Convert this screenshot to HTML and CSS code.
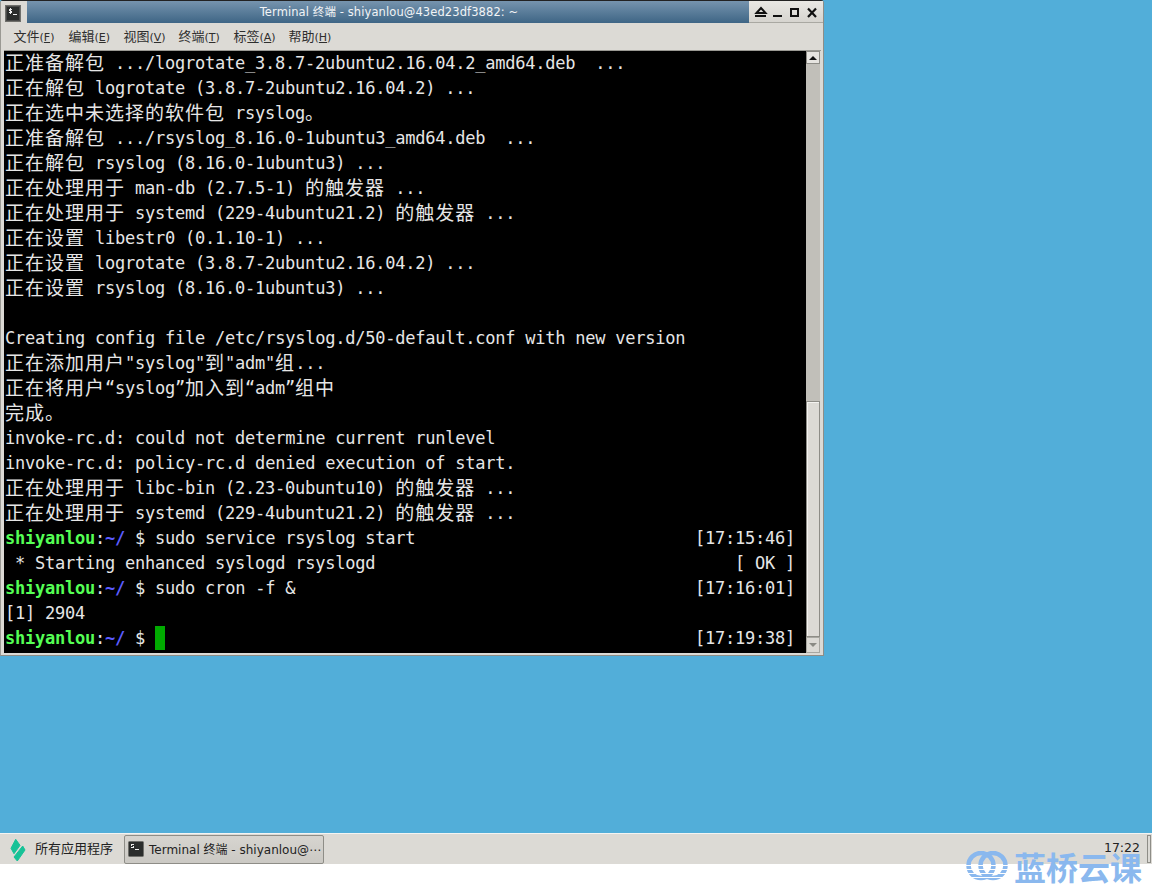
FILE: index.html
```html
<!DOCTYPE html>
<html lang="zh-CN">
<head>
<meta charset="utf-8">
<title>Terminal</title>
<link rel="stylesheet" href="styles.css">
</head>
<body>
<main class="desktop">
  <section class="window">
    <header class="titlebar">
      <div class="win-icon">
        <svg width="16" height="17" viewBox="0 0 16 17"><rect x="0.5" y="0.500" width="15" height="16" fill="#2b2d2c" stroke="#6f6f6b"/><rect x="1.500" y="1.500" width="13" height="14" fill="none" stroke="#4a4b4a"/><path d="M4 4h3v1H5v1h2v2H4V7h2V6H4zM5 3h1v6H5z" fill="#eeeeee"/><rect x="8" y="9" width="4" height="1" fill="#eeeeee"/></svg>
      </div>
      <div class="title">Terminal 终端 - shiyanlou@43ed23df3882: ~</div>
      <div class="win-buttons">
        <svg width="74" height="22" viewBox="0 0 74 22">
          <path d="M7.500 12 12 7l4.500 5z" fill="none" stroke="#111" stroke-width="2"/><rect x="6" y="14" width="11" height="2" fill="#111"/>
          <rect x="24" y="14" width="9" height="2" fill="#111"/>
          <rect x="42" y="8" width="7" height="7" fill="none" stroke="#111" stroke-width="2"/>
          <path d="M59 7.500l8 8.500M67 7.500l-8 8.500" stroke="#111" stroke-width="2.200" fill="none"/>
        </svg>
      </div>
    </header>
    <nav class="menubar">
      <span class="menu"><span class="mc">文件</span>(<u>F</u>)</span>
      <span class="menu"><span class="mc">编辑</span>(<u>E</u>)</span>
      <span class="menu"><span class="mc">视图</span>(<u>V</u>)</span>
      <span class="menu"><span class="mc">终端</span>(<u>T</u>)</span>
      <span class="menu"><span class="mc">标签</span>(<u>A</u>)</span>
      <span class="menu"><span class="mc">帮助</span>(<u>H</u>)</span>
    </nav>
    <div class="term-wrap">
      <div class="terminal">
        <div class="row"><span class="c">正准备解包</span> .../logrotate_3.8.7-2ubuntu2.16.04.2_amd64.deb  ...</div>
        <div class="row"><span class="c">正在解包</span> logrotate (3.8.7-2ubuntu2.16.04.2) ...</div>
        <div class="row"><span class="c">正在选中未选择的软件包</span> rsyslog<span class="c">。</span></div>
        <div class="row"><span class="c">正准备解包</span> .../rsyslog_8.16.0-1ubuntu3_amd64.deb  ...</div>
        <div class="row"><span class="c">正在解包</span> rsyslog (8.16.0-1ubuntu3) ...</div>
        <div class="row"><span class="c">正在处理用于</span> man-db (2.7.5-1) <span class="c">的触发器</span> ...</div>
        <div class="row"><span class="c">正在处理用于</span> systemd (229-4ubuntu21.2) <span class="c">的触发器</span> ...</div>
        <div class="row"><span class="c">正在设置</span> libestr0 (0.1.10-1) ...</div>
        <div class="row"><span class="c">正在设置</span> logrotate (3.8.7-2ubuntu2.16.04.2) ...</div>
        <div class="row"><span class="c">正在设置</span> rsyslog (8.16.0-1ubuntu3) ...</div>
        <div class="row"> </div>
        <div class="row">Creating config file /etc/rsyslog.d/50-default.conf with new version</div>
        <div class="row"><span class="c">正在添加用户</span>"syslog"<span class="c">到</span>"adm"<span class="c">组</span>...</div>
        <div class="row"><span class="c">正在将用户</span>“syslog”<span class="c">加入到</span>“adm”<span class="c">组中</span></div>
        <div class="row"><span class="c">完成。</span></div>
        <div class="row">invoke-rc.d: could not determine current runlevel</div>
        <div class="row">invoke-rc.d: policy-rc.d denied execution of start.</div>
        <div class="row"><span class="c">正在处理用于</span> libc-bin (2.23-0ubuntu10) <span class="c">的触发器</span> ...</div>
        <div class="row"><span class="c">正在处理用于</span> systemd (229-4ubuntu21.2) <span class="c">的触发器</span> ...</div>
        <div class="row split"><span><span class="user">shiyanlou</span>:<span class="path">~/</span> $ sudo service rsyslog start</span><span>[17:15:46]</span></div>
        <div class="row split"><span> * Starting enhanced syslogd rsyslogd</span><span>[ OK ]</span></div>
        <div class="row split"><span><span class="user">shiyanlou</span>:<span class="path">~/</span> $ sudo cron -f &amp;</span><span>[17:16:01]</span></div>
        <div class="row">[1] 2904</div>
        <div class="row split"><span><span class="user">shiyanlou</span>:<span class="path">~/</span> $ <span class="cursor"></span></span><span>[17:19:38]</span></div>
      </div>
      <div class="scrollbar">
        <div class="sb-btn"><span class="arrow-up"></span></div>
        <div class="sb-track"><div class="sb-thumb"></div></div>
        <div class="sb-btn sb-down"><span class="arrow-down"></span></div>
      </div>
    </div>
  </section>
</main>
<footer class="panel">
  <div class="start">
    <svg width="18" height="26" viewBox="0 0 18 26"><path d="M6.700 3.300 11 9.300 5 17.700 2 12.300Z" fill="#17c297" stroke="#17c297" stroke-linejoin="round"/><path d="M13.700 10 16 14 8.300 25 5 21Z" fill="#17c297" stroke="#17c297" stroke-linejoin="round"/></svg>
    <span>所有应用程序</span>
  </div>
  <div class="task">
    <svg width="16" height="16" viewBox="0 0 16 16"><rect x="0.500" y="0.500" width="15" height="15" rx="1" fill="#2b2d2c" stroke="#6f6f6b"/><path d="M3 3h3v1H4v1h2v2H3V6h2V5H3z" fill="#eeeeee"/><rect x="7" y="8" width="4" height="1" fill="#eeeeee"/></svg>
    <span>Terminal 终端 - shiyanlou@⋯</span>
  </div>
  <div class="clock">17:22</div>
  <div class="handle"></div>
</footer>
<div class="bottom"></div>
<div class="watermark">
  <svg width="42" height="30" viewBox="0 0 42 30"><circle cx="15" cy="14.500" r="12.500" fill="none" stroke="#8ab8ee" stroke-width="4.500"/><circle cx="27" cy="14.500" r="12.500" fill="none" stroke="#8ab8ee" stroke-width="4.500"/><path d="M0 14.500h42M0 18.500h42M0 22.500h42M0 26.500h42" stroke="#ffffff" stroke-width="1.200"/></svg>
  <span>蓝桥云课</span>
</div>
</body>
</html>
```
FILE: styles.css
```css
* { box-sizing: border-box; }
html, body { margin: 0; padding: 0; }
body {
  width: 1152px;
  height: 896px;
  overflow: hidden;
  background: #fff;
  position: relative;
  font-family: "DejaVu Sans", "Noto Sans CJK SC", sans-serif;
}
.desktop {
  height: 833px;
  background: #52aed9;
  display: flex;
  align-items: flex-start;
}
.window {
  width: 824px;
  height: 656px;
  background: #dcdad5;
  border: 1px solid #8e8d87;
  border-top-color: #222;
  border-left-color: #9a9993;
  border-radius: 3px 3px 0 0;
  display: flex;
  flex-direction: column;
}
.titlebar {
  height: 22px;
  display: flex;
  align-items: stretch;
  background: linear-gradient(#7694ae, #3e6585);
  flex: none;
}
.win-icon {
  width: 26px;
  background: #dcdad5;
  display: flex;
  align-items: center;
  justify-content: center;
  padding: 2px 2px 0 0;
}
.title {
  flex: 1;
  color: #f2f4f6;
  font-size: 11.500px;
  line-height: 22px;
  text-align: center;
  letter-spacing: 0.1px;
  padding-left: 2px;
}
.win-buttons {
  width: 74px;
  background: linear-gradient(#e9e8e4, #d6d4cf);
  border-bottom: 1px solid #a9a8a2;
}
.menubar {
  height: 27px;
  flex: none;
  display: flex;
  gap: 14px;
  align-items: center;
  padding: 0 0 3px 12.500px;
  font-size: 11px;
  color: #2e2e2e;
}
.menu { width: 41px; white-space: nowrap; }
.mc {
  font-family: "Noto Sans CJK SC", sans-serif;
  font-size: 13px;
}
.term-wrap {
  flex: 1;
  display: flex;
  margin: 0 2px 2px 3px;
  border-top: 1px solid #9a9993;
  min-height: 0;
}
.terminal {
  width: 802px;
  background: #000;
  color: #e6e6e6;
  padding: 0 0 0 1px;
  font-family: "DejaVu Sans Mono", "Noto Sans CJK SC", monospace;
  font-size: 17px;
  letter-spacing: -0.23px;
  line-height: 25px;
}
.row {
  height: 25px;
  white-space: pre;
}
.split {
  display: flex;
  justify-content: space-between;
  padding-right: 11px;
}
.c {
  font-family: "Noto Sans CJK SC", sans-serif;
  font-size: 19px;
  letter-spacing: 1px;
  line-height: 1;
  vertical-align: -1px;
}
.user { color: #55ff55; font-weight: 700; }
.path { color: #5c5cff; font-weight: 700; }
.cursor {
  display: inline-block;
  width: 10px;
  height: 24px;
  background: #00aa00;
  vertical-align: -6px;
}
.scrollbar {
  width: 14px;
  display: flex;
  flex-direction: column;
  background: #c1bfb9;
}
.sb-btn {
  height: 13px;
  flex: none;
  background: #e6e4e0;
  border: 1px solid #8e8d87;
  display: flex;
  align-items: center;
  justify-content: center;
}
.sb-down { height: 16px; background: #dcdad5; border-color: #a8a7a1; }
.arrow-up {
  border: 4px solid transparent;
  border-top: 0;
  border-bottom: 4px solid #111;
}
.arrow-down {
  border: 4px solid transparent;
  border-bottom: 0;
  border-top: 4px solid #8a8a84;
}
.sb-track {
  flex: 1;
  display: flex;
  align-items: flex-end;
}
.sb-thumb {
  width: 100%;
  height: 236px;
  background: #dcdad5;
  border: 1px solid #8e8d87;
  box-shadow: inset 1px 1px 0 #f4f3f0;
}
.panel {
  height: 31px;
  background: #dcdad5;
  border-top: 1px solid #f4f4f2;
  display: flex;
  align-items: stretch;
  font-size: 12px;
  color: #222;
  position: relative;
}
.start {
  width: 124px;
  display: flex;
  align-items: center;
  gap: 8px;
  padding: 0 0 3px 9px;
  font-family: "Noto Sans CJK SC", sans-serif;
  font-size: 13px;
}
.start svg { margin-bottom: -3px; }
.task {
  width: 200px;
  margin-top: 1px;
  display: flex;
  align-items: center;
  gap: 5px;
  padding: 0 0 2px 3px;
  background: linear-gradient(#d6d4cf, #cbc9c4);
  border: 1px solid #8e8d87;
  border-radius: 2px;
  white-space: nowrap;
}
.clock {
  margin-left: auto;
  margin-right: 7px;
  line-height: 28px;
  font-size: 12.500px;
}
.handle {
  width: 4px;
  height: 28px;
  margin: 1px 1px 0 0;
  border: 1px solid #8e8d87;
}
.bottom { height: 32px; background: #fff; }
.watermark {
  position: absolute;
  left: 966px;
  top: 851px;
  display: flex;
  align-items: center;
  gap: 6px;
  color: #8ab8ee;
  font-family: "Noto Sans CJK SC", sans-serif;
  font-weight: 700;
  font-size: 32px;
  line-height: 30px;
}
```
